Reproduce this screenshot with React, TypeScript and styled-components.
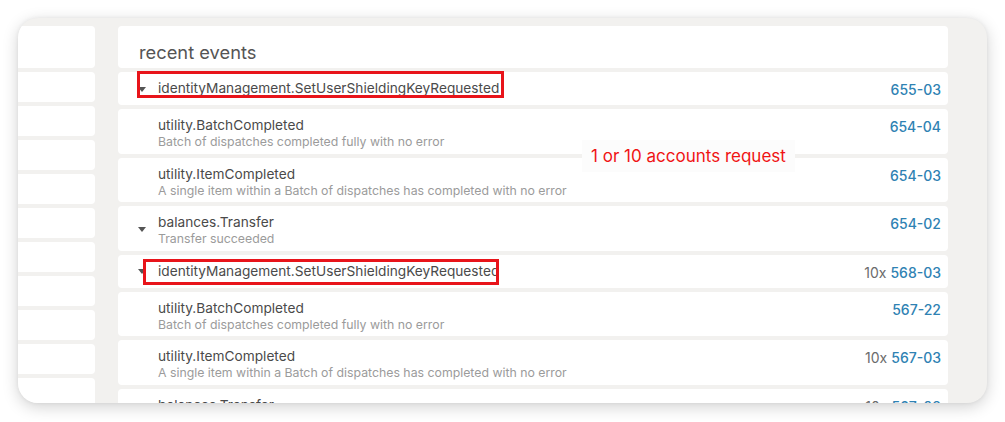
import React from "react";
import styled, { createGlobalStyle } from "styled-components";

type EventItem = {
  title: string;
  desc?: string;
  caret?: boolean;
  count?: string;
  id: string;
  marked?: boolean;
};

const events: EventItem[] = [
  { title: "identityManagement.SetUserShieldingKeyRequested", caret: true, id: "655-03", marked: true },
  { title: "utility.BatchCompleted", desc: "Batch of dispatches completed fully with no error", id: "654-04" },
  { title: "utility.ItemCompleted", desc: "A single item within a Batch of dispatches has completed with no error", id: "654-03" },
  { title: "balances.Transfer", desc: "Transfer succeeded", caret: true, id: "654-02" },
  { title: "identityManagement.SetUserShieldingKeyRequested", caret: true, count: "10x", id: "568-03", marked: true },
  { title: "utility.BatchCompleted", desc: "Batch of dispatches completed fully with no error", id: "567-22" },
  { title: "utility.ItemCompleted", desc: "A single item within a Batch of dispatches has completed with no error", count: "10x", id: "567-03" },
  { title: "balances.Transfer", desc: "Transfer succeeded", caret: true, count: "10x", id: "567-02" },
];

const sideCards = [42, 30, 30, 30, 30, 30, 30, 30, 30, 30, 30];

const GlobalStyle = createGlobalStyle`
  html, body {
    margin: 0;
    padding: 0;
    background: #fff;
  }
  body {
    font-family: Inter, "Liberation Sans", sans-serif;
  }
`;

const Page = styled.div`
  padding: 18px;
`;

const Frame = styled.div`
  width: 969px;
  height: 385px;
  border-radius: 20px;
  background: #f2f1ef;
  box-shadow: 0 4px 16px rgba(0, 0, 0, 0.18), 0 0 4px rgba(0, 0, 0, 0.06);
  overflow: hidden;
  display: flex;
  align-items: flex-start;
  padding-top: 8px;
  box-sizing: border-box;
`;

const SideColumn = styled.div`
  width: 77px;
  flex-shrink: 0;
  display: flex;
  flex-direction: column;
  gap: 4px;
`;

const SideCard = styled.div<{ $h: number }>`
  height: ${(p) => p.$h}px;
  background: #fff;
  border-radius: 0 4px 4px 0;
`;

const Main = styled.div`
  position: relative;
  width: 830px;
  margin-left: 23px;
  flex-shrink: 0;
  display: flex;
  flex-direction: column;
  gap: 4px;
`;

const Header = styled.div`
  height: 42px;
  box-sizing: border-box;
  background: #fff;
  border-radius: 4px;
  padding: 13px 21px 0;
  font-size: 18.3px;
  line-height: 26px;
  color: #555;
`;

const Row = styled.div`
  position: relative;
  display: flex;
  align-items: flex-start;
  background: #fff;
  border-radius: 4px;
  padding: 7px 7px 6px 0;
`;

const CaretCell = styled.div`
  width: 40px;
  flex-shrink: 0;
  align-self: center;
  display: flex;
  justify-content: center;
  padding-left: 7px;
  box-sizing: border-box;
`;

const Caret = styled.span<{ $show: boolean }>`
  width: 0;
  height: 0;
  border-left: 4px solid transparent;
  border-right: 4px solid transparent;
  border-top: 5px solid ${(p) => (p.$show ? "#555" : "transparent")};
`;

const Info = styled.div`
  flex: 1;
  min-width: 0;
`;

const Title = styled.div`
  font-size: 13.7px;
  line-height: 19px;
  color: #4a4a4a;
  white-space: nowrap;
`;

const Desc = styled.div`
  font-size: 12.3px;
  line-height: 13px;
  margin-bottom: -0.4px;
  color: #9b9b9b;
  white-space: nowrap;
`;

const Meta = styled.div`
  font-size: 14px;
  line-height: 19px;
  padding-top: 1px;
  white-space: nowrap;
`;

const Count = styled.span`
  color: #6b6b6b;
  margin-right: 4px;
`;

const BlockId = styled.span`
  color: #2f82b3;
  font-weight: 500;
`;

const MarkBox = styled.div<{ $left: number; $top: number; $w: number; $h: number }>`
  position: absolute;
  left: ${(p) => p.$left}px;
  top: ${(p) => p.$top}px;
  width: ${(p) => p.$w}px;
  height: ${(p) => p.$h}px;
  border: 3px solid #e8141a;
  box-sizing: border-box;
  pointer-events: none;
`;

const Note = styled.div`
  position: absolute;
  left: 464px;
  top: 114px;
  padding: 5px 9px;
  background: rgba(252, 252, 252, 0.95);
  color: #f01414;
  font-size: 17px;
  line-height: 22px;
  white-space: nowrap;
`;

const marks = [
  { left: 19, top: -1, w: 367, h: 27 },
  { left: 25, top: 4, w: 356, h: 26 },
];

export default function App() {
  let markIndex = 0;
  return (
    <>
      <GlobalStyle />
      <Page>
        <Frame>
          <SideColumn>
            {sideCards.map((h, i) => (
              <SideCard key={i} $h={h} />
            ))}
          </SideColumn>
          <Main>
            <Header>recent events</Header>
            {events.map((ev, i) => {
              const m = ev.marked ? marks[markIndex++] : null;
              return (
                <Row key={i}>
                  <CaretCell>
                    <Caret $show={!!ev.caret} />
                  </CaretCell>
                  <Info>
                    <Title>{ev.title}</Title>
                    {ev.desc && <Desc>{ev.desc}</Desc>}
                  </Info>
                  <Meta>
                    {ev.count && <Count>{ev.count}</Count>}
                    <BlockId>{ev.id}</BlockId>
                  </Meta>
                  {m && <MarkBox $left={m.left} $top={m.top} $w={m.w} $h={m.h} />}
                </Row>
              );
            })}
            <Note>1 or 10 accounts request</Note>
          </Main>
        </Frame>
      </Page>
    </>
  );
}
